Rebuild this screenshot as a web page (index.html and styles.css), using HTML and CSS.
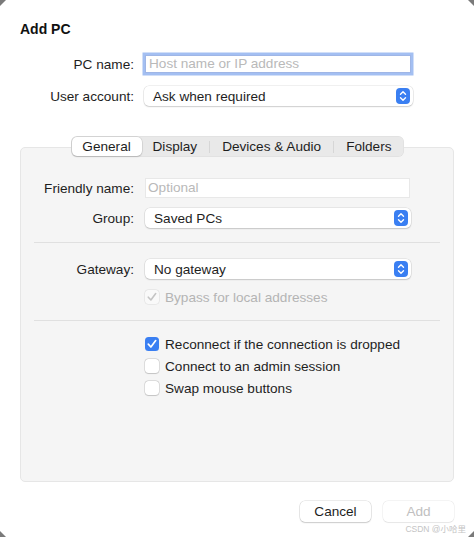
FILE: index.html
```html
<!DOCTYPE html>
<html>
<head>
<meta charset="utf-8">
<link rel="stylesheet" href="styles.css">
</head>
<body>
<div class="dialog">
  <h1 class="title">Add PC</h1>
  <div class="row row-first">
    <label class="lbl">PC name:</label>
    <div class="input focus"><span class="ph">Host name or IP address</span></div>
  </div>
  <div class="row row-second">
    <label class="lbl">User account:</label>
    <div class="popup wide">
      <span>Ask when required</span>
      <svg class="stepper" width="14" height="16" viewBox="0 0 14 16"><rect width="14" height="16" rx="4" fill="#3a7ff2"/><path d="M4.5 6.3 L7 3.8 L9.5 6.3 M4.5 9.7 L7 12.2 L9.5 9.7" fill="none" stroke="#fff" stroke-width="1.4" stroke-linecap="round" stroke-linejoin="round"/></svg>
    </div>
  </div>

  <div class="tabs-wrap">
    <div class="tabs">
      <div class="tab sel">General</div>
      <div class="tab">Display</div>
      <div class="tdiv"></div>
      <div class="tab">Devices &amp; Audio</div>
      <div class="tdiv"></div>
      <div class="tab">Folders</div>
    </div>
  </div>
  <div class="box">
    <div class="row brow first">
      <label class="lbl">Friendly name:</label>
      <div class="input plain"><span class="ph">Optional</span></div>
    </div>
    <div class="row brow">
      <label class="lbl">Group:</label>
      <div class="popup">
        <span>Saved PCs</span>
        <svg class="stepper" width="14" height="16" viewBox="0 0 14 16"><rect width="14" height="16" rx="4" fill="#3a7ff2"/><path d="M4.5 6.3 L7 3.8 L9.5 6.3 M4.5 9.7 L7 12.2 L9.5 9.7" fill="none" stroke="#fff" stroke-width="1.4" stroke-linecap="round" stroke-linejoin="round"/></svg>
      </div>
    </div>
    <div class="sep sep1"></div>
    <div class="row brow gw">
      <label class="lbl">Gateway:</label>
      <div class="popup">
        <span>No gateway</span>
        <svg class="stepper" width="14" height="16" viewBox="0 0 14 16"><rect width="14" height="16" rx="4" fill="#3a7ff2"/><path d="M4.5 6.3 L7 3.8 L9.5 6.3 M4.5 9.7 L7 12.2 L9.5 9.7" fill="none" stroke="#fff" stroke-width="1.4" stroke-linecap="round" stroke-linejoin="round"/></svg>
      </div>
    </div>
    <div class="check disabled bypass">
      <span class="cb dis"><svg width="14" height="14" viewBox="0 0 14 14"><path d="M3.3 7.2 L5.9 10 L10.7 3.6" fill="none" stroke="#c4c4c4" stroke-width="1.6" stroke-linecap="round" stroke-linejoin="round"/></svg></span>
      <span>Bypass for local addresses</span>
    </div>
    <div class="sep sep2"></div>
    <div class="checks">
      <div class="check">
        <span class="cb on"><svg width="14" height="14" viewBox="0 0 14 14"><path d="M3.3 7.2 L5.9 10 L10.7 3.6" fill="none" stroke="#fff" stroke-width="1.7" stroke-linecap="round" stroke-linejoin="round"/></svg></span>
        <span>Reconnect if the connection is dropped</span>
      </div>
      <div class="check">
        <span class="cb"></span>
        <span>Connect to an admin session</span>
      </div>
      <div class="check">
        <span class="cb"></span>
        <span>Swap mouse buttons</span>
      </div>
    </div>
  </div>

  <div class="buttons">
    <div class="btn">Cancel</div>
    <div class="btn off">Add</div>
  </div>
  <div class="wm">CSDN @小哈里</div>
</div>
<span class="corner tl"></span>
<span class="corner tr"></span>
<span class="corner bl"></span>
<span class="corner br"></span>
</body>
</html>
```

FILE: styles.css
```css
* { box-sizing: border-box; }
html, body { margin: 0; padding: 0; background: #fff; }
body {
  width: 474px;
  height: 537px;
  overflow: hidden;
  position: relative;
  font-family: "Liberation Sans", Arial, "Noto Sans CJK SC", sans-serif;
  font-size: 13.6px;
  color: #1e1e1e;
}
.dialog { padding: 0 20px 0 20px; position: relative; height: 537px; }
.title {
  margin: 0;
  padding-top: 21px;
  height: 36px;
  font-size: 14px;
  font-weight: bold;
  line-height: 16px;
  color: #111;
}
.row { display: flex; align-items: center; }
.lbl {
  width: 114px;
  text-align: right;
  margin-right: 10px;
  flex: none;
}
.row-first { margin-top: 19px; height: 18px; }
.row-second { margin-top: 13px; height: 20px; }
.input {
  height: 18px;
  background: #fff;
  border: 1px solid #dedede;
  padding-left: 3px;
  display: flex;
  align-items: center;
  line-height: 16px;
}
.input.focus {
  width: 266px;
  margin-left: 1px;
  border-color: #9fb6e6;
  box-shadow: 0 0 0 2.5px #a3bff2;
}
.ph { color: #b9b9b9; }
.popup {
  position: relative;
  width: 266px;
  height: 20px;
  background: #fff;
  border-radius: 5px;
  box-shadow: 0 0 0 0.5px rgba(0,0,0,0.12), 0 1px 1.5px rgba(0,0,0,0.14);
  display: flex;
  align-items: center;
  padding-left: 9px;
}
.popup.wide { width: 269px; }
.stepper { position: absolute; right: 3px; top: 2px; }

.tabs-wrap { display: flex; justify-content: center; margin-top: 30px; margin-bottom: -10px; position: relative; z-index: 1; }
.tabs {
  display: flex;
  align-items: center;
  height: 21px;
  background: #e9e9e9;
  border-radius: 6px;
  box-shadow: inset 0 0 0 0.5px rgba(0,0,0,0.06);
  padding: 0 1px;
  margin-left: 1px;
}
.tab { padding: 0 12px; line-height: 19px; height: 19px; }
.tab.sel {
  background: #fff;
  border-radius: 5px;
  box-shadow: 0 0 0 0.5px rgba(0,0,0,0.12), 0 1px 1.5px rgba(0,0,0,0.15);
  width: 70px;
  text-align: center;
  padding: 0;
}
.tab:nth-child(2) { padding: 0 12px 0 11px; }
.tdiv { width: 1px; height: 12px; background: #d6d6d6; }
.box {
  background: #f5f5f5;
  border: 1px solid #e6e6e6;
  border-radius: 5px;
  height: 335px;
  padding-top: 30px;
}
.brow .lbl { width: 113px; margin-right: 11px; }
.brow.first { height: 20px; }
.brow .input.plain { width: 265px; height: 20px; border-color: #e8e8e8; padding-left: 2px; }
.brow .popup { width: 266px; }
.brow { margin-top: 10px; }
.brow.first { margin-top: 0; }
.sep { height: 1px; background: #e0e0e0; margin: 0 13px; }
.sep1 { margin-top: 14px; }
.gw { margin-top: 16px; }
.check { display: flex; align-items: center; height: 22px; padding-left: 124px; }
.cb {
  width: 14px;
  height: 14px;
  border-radius: 3.5px;
  background: #fff;
  box-shadow: 0 0 0 0.5px rgba(0,0,0,0.18), 0 0.5px 1px rgba(0,0,0,0.12);
  margin-right: 6px;
  flex: none;
  display: flex;
}
.cb.on { background: #3a7ff2; box-shadow: none; }
.cb.dis { background: #f9f9f9; box-shadow: 0 0 0 0.5px rgba(0,0,0,0.1); }
.check.disabled { color: #b4b4b4; }
.bypass { margin-top: 7px; }
.sep2 { margin-top: 12px; }
.checks { margin-top: 12px; }

.buttons { display: flex; justify-content: flex-end; gap: 12px; margin-top: 19px; }
.btn {
  width: 71px;
  height: 21px;
  line-height: 21px;
  text-align: center;
  background: #fff;
  border-radius: 5px;
  box-shadow: 0 0 0 0.5px rgba(0,0,0,0.15), 0 1px 1.5px rgba(0,0,0,0.14);
}
.btn.off { color: #c0c0c0; box-shadow: 0 0 0 0.5px rgba(0,0,0,0.08), 0 0.5px 1px rgba(0,0,0,0.06); }
.wm {
  position: absolute;
  right: 8px;
  bottom: 3px;
  font-size: 8.5px;
  color: #c4c4c4;
}
.corner { position: absolute; width: 6px; height: 6px; background: #7a7a7a; }
.corner.tl { left: 0; top: 0; clip-path: polygon(0 0, 100% 0, 0 100%); }
.corner.tr { right: 0; top: 0; clip-path: polygon(0 0, 100% 0, 100% 100%); }
.corner.bl { left: 0; bottom: 0; clip-path: polygon(0 0, 100% 100%, 0 100%); }
.corner.br { right: 0; bottom: 0; clip-path: polygon(100% 0, 100% 100%, 0 100%); }
```
